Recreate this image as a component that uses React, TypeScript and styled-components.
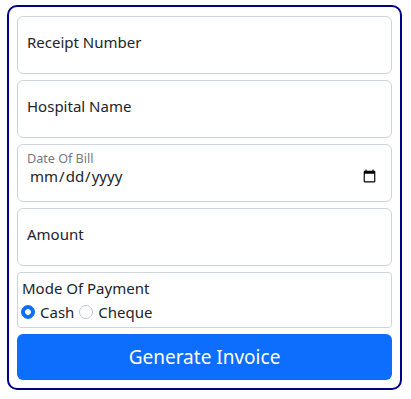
import React, { useState } from "react";
import styled, { createGlobalStyle } from "styled-components";

const GlobalStyle = createGlobalStyle`
  html, body { margin: 0; padding: 0; background: #ffffff; }
  body {
    font-family: "Segoe UI", "Noto Sans", "Open Sans", sans-serif;
    color: #212529;
    font-size: 15px;
    line-height: 1.5;
  }
  * { box-sizing: border-box; }
`;

const Page = styled.div`
  padding: 5px 10px 9px 7px;
`;

const Card = styled.form`
  width: 395px;
  border: 2px solid #00008b;
  border-radius: 10px;
  padding: 9px 8px 8px 8px;
  display: flex;
  flex-direction: column;
  gap: 6px;
`;

const Field = styled.div`
  position: relative;
`;

const TextInput = styled.input<{ $floating?: boolean }>`
  display: block;
  width: 100%;
  height: 58px;
  margin: 0;
  border: 1px solid #ced4da;
  border-radius: 6px;
  font-family: inherit;
  font-size: 15px;
  line-height: 1.5;
  color: #212529;
  background: #fff;
  padding: ${(p) => (p.$floating ? "21px 12px 15px 11px" : "13px 9px 19px 9px")};
  outline: none;
  &::placeholder { color: #212529; opacity: 1; }
  &::-webkit-datetime-edit { padding: 0; }
  &::-webkit-calendar-picker-indicator { margin-right: 0px; }
`;

const FloatLabel = styled.label`
  position: absolute;
  top: 6px;
  left: 10px;
  font-size: 12.6px;
  line-height: 1.5;
  color: rgba(33, 37, 41, 0.65);
  pointer-events: none;
`;

const PaymentBox = styled.fieldset`
  margin: 0;
  min-width: 0;
  height: 56px;
  border: 1px solid #ced4da;
  border-radius: 4px;
  padding: 3px 4px 3px 3px;
  display: flex;
  flex-direction: column;
`;

const PaymentTitle = styled.legend`
  float: left;
  padding: 0 0 0 1px;
  margin: 0;
  line-height: 24px;
  font-size: 15px;
  color: #212529;
`;

const RadioRow = styled.div`
  display: flex;
  align-items: center;
  height: 24px;
  clear: both;
`;

const RadioLabel = styled.label`
  display: inline-flex;
  align-items: center;
  gap: 5px;
  margin-right: 5px;
  font-size: 15px;
  line-height: 24px;
  cursor: pointer;
`;

const Radio = styled.input`
  appearance: none;
  -webkit-appearance: none;
  margin: 0;
  width: 14px;
  height: 14px;
  border-radius: 50%;
  border: 1px solid #bfc4c9;
  background: #fff;
  flex: none;
  &:checked {
    border-color: #0d6efd;
    background: radial-gradient(circle, #fff 0 2.6px, #0d6efd 3.2px);
  }
`;

const SubmitButton = styled.button`
  height: 46px;
  width: 100%;
  border: 0;
  border-radius: 6px;
  background: #0d6efd;
  color: #fff;
  font-family: inherit;
  font-size: 19px;
  line-height: 1.5;
  cursor: pointer;
`;

export default function App() {
  const [mode, setMode] = useState("cash");
  return (
    <>
      <GlobalStyle />
      <Page>
        <Card onSubmit={(e) => e.preventDefault()}>
          <Field>
            <TextInput type="text" placeholder="Receipt Number" />
          </Field>
          <Field>
            <TextInput type="text" placeholder="Hospital Name" />
          </Field>
          <Field>
            <TextInput type="date" $floating id="dob" />
            <FloatLabel htmlFor="dob">Date Of Bill</FloatLabel>
          </Field>
          <Field>
            <TextInput type="number" placeholder="Amount" />
          </Field>
          <PaymentBox>
            <PaymentTitle>Mode Of Payment</PaymentTitle>
            <RadioRow>
              <RadioLabel>
                <Radio
                  type="radio"
                  name="mode"
                  checked={mode === "cash"}
                  onChange={() => setMode("cash")}
                />
                Cash
              </RadioLabel>
              <RadioLabel>
                <Radio
                  type="radio"
                  name="mode"
                  checked={mode === "cheque"}
                  onChange={() => setMode("cheque")}
                />
                Cheque
              </RadioLabel>
            </RadioRow>
          </PaymentBox>
          <SubmitButton type="submit">Generate Invoice</SubmitButton>
        </Card>
      </Page>
    </>
  );
}
